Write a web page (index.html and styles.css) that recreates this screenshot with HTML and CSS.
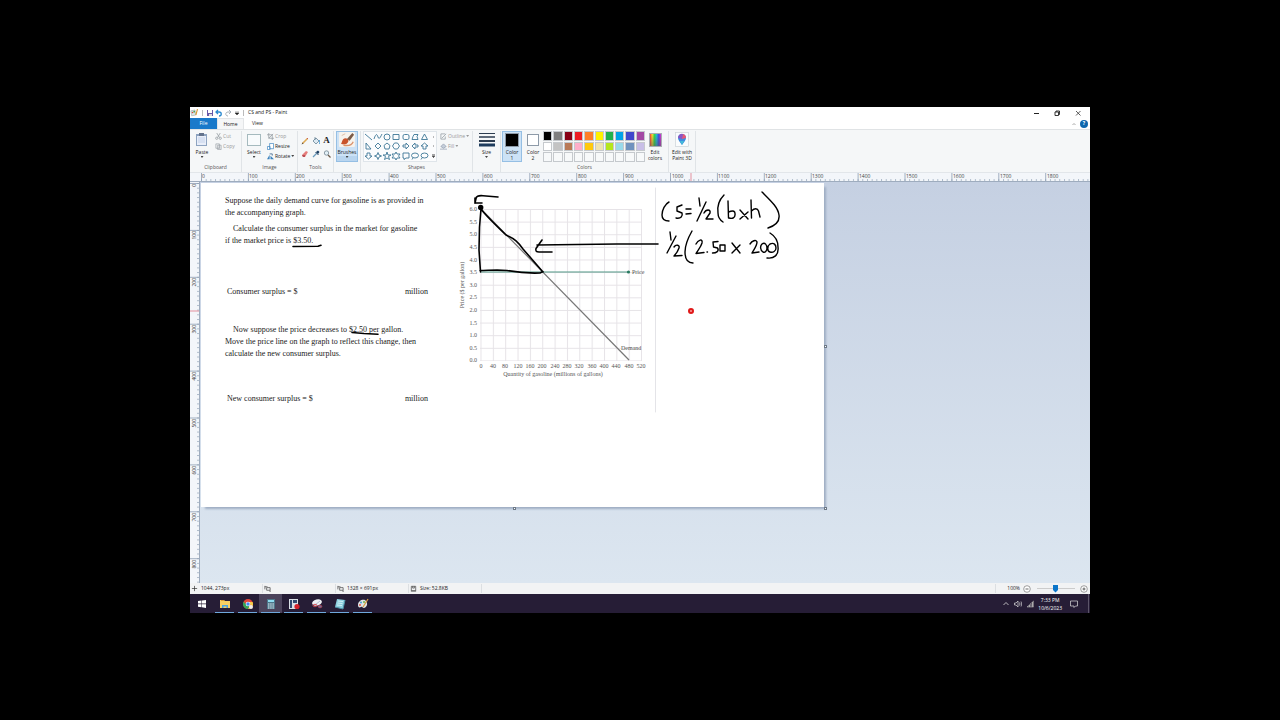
FILE: index.html
```html
<!DOCTYPE html>
<html lang="en">
<head>
    <meta charset="UTF-8">
    <meta name="viewport" content="width=device-width, initial-scale=1.0">
    <title>CS and PS - Paint</title>
    <link rel="stylesheet" href="styles.css">
</head>
<body>
    <div class="desktop">
        <header class="titlebar">
            <svg class="app-icon" viewBox="0 0 12 10"><path d="M1 3l5-1 1 6-5 1z" fill="#d9e4e8" stroke="#8a9a9c" stroke-width=".6"/><circle cx="3" cy="5" r="1" fill="#d94b3a"/><circle cx="5" cy="4" r="1" fill="#4aa24a"/><path d="M7 8L9 1" stroke="#d9962f" stroke-width="1.3"/></svg>
            <span class="bar-sep"></span>
            <button class="quick" aria-label="Save"><svg viewBox="0 0 8 8"><path d="M1 1h6v6H1z" fill="#6a59a8"/><path d="M2 1h4v3H2z" fill="#fff"/><path d="M3 5h3v2H3z" fill="#ddd"/></svg></button>
            <button class="quick" aria-label="Undo"><svg viewBox="0 0 8 8"><path d="M3 1L1 3l2 2M1 3h3c3 0 3 4 0 4" fill="none" stroke="#2b8ad0" stroke-width="1.3"/></svg></button>
            <button class="quick" aria-label="Redo"><svg viewBox="0 0 8 8"><path d="M5 1l2 2-2 2M7 3H4C1 3 1 7 4 7" fill="none" stroke="#a8b0b8"/></svg></button>
            <button class="quick" aria-label="Customize"><svg viewBox="0 0 8 8"><path d="M2 3h4M2 4h4L4 6z" fill="#222" stroke="#222" stroke-width=".4"/></svg></button>
            <span class="bar-sep"></span>
            <h1 class="window-title">CS and PS - Paint</h1>
            <button class="win-btn" aria-label="Minimize"><svg viewBox="0 0 8 8"><path d="M2 4.500h5" stroke="#222"/></svg></button>
            <button class="win-btn" aria-label="Restore"><svg viewBox="0 0 8 8"><path d="M2 3h3.500v3.500H2zM3 3V2h3.500v3.500h-1" fill="none" stroke="#222" stroke-width=".9"/></svg></button>
            <button class="win-btn" aria-label="Close"><svg viewBox="0 0 8 8"><path d="M2 2l4.500 4.500M6.500 2L2 6.500" stroke="#333" stroke-width=".8"/></svg></button>
        </header>

        <nav class="tabs">
            <button class="tab tab-file">File</button>
            <button class="tab tab-active">Home</button>
            <button class="tab">View</button>
            <button class="tab-tool" aria-label="Collapse ribbon"><svg viewBox="0 0 8 8"><path d="M2.500 5L4 3.500 5.500 5" fill="none" stroke="#888" stroke-width=".7"/></svg></button>
            <button class="help" aria-label="Help">?</button>
        </nav>

        <section class="ribbon">
            <div class="group clipboard">
                <div class="group-body">
                    <button class="big">
                        <svg class="big-icon" viewBox="0 0 14 15"><path d="M1 2h11v12H1z" fill="#8da3c0"/><path d="M2 4h9v9H2z" fill="#e8eef9"/><path d="M4 1h5v3H4z" fill="#63738c"/><path d="M3 6h7M3 8h7M3 10h7" stroke="#b5c6e4" stroke-width=".7"/></svg>
                        Paste<i class="arrow"></i>
                    </button>
                    <div class="stack">
                        <button class="small off"><svg viewBox="0 0 8 8"><path d="M2 0l3 5M6 0L3 5" stroke="#8e969c" stroke-width=".8"/><circle cx="2" cy="6" r="1.300" fill="none" stroke="#8e969c" stroke-width=".8"/><circle cx="6" cy="6" r="1.300" fill="none" stroke="#8e969c" stroke-width=".8"/></svg>Cut</button>
                        <button class="small off"><svg viewBox="0 0 8 8"><path d="M1 1h4v5H1zM3 2.500h4v5H3z" fill="#f5f6f7" stroke="#8e969c" stroke-width=".7"/><path d="M4 4.500h2M4 6h2" stroke="#8e969c" stroke-width=".5"/></svg>Copy</button>
                    </div>
                </div>
                <h2 class="group-label">Clipboard</h2>
            </div>

            <div class="group image">
                <div class="group-body">
                    <button class="big">
                        <svg class="big-icon" viewBox="0 0 14 15"><path d="M.500 2.500h13v11H.500z" fill="#f8fbfc" stroke="#3f6c74" stroke-dasharray="1 1" stroke-width=".9"/></svg>
                        Select<i class="arrow"></i>
                    </button>
                    <div class="stack">
                        <button class="small off"><svg viewBox="0 0 8 8"><path d="M2 0v6h6M0 2h6v6M2 6l5-5" fill="none" stroke="#8e969c" stroke-width=".8"/></svg>Crop</button>
                        <button class="small"><svg viewBox="0 0 8 8"><path d="M3 .500h4.500v6H3zM.500 4h3v3.500h-3z" fill="#fff" stroke="#3b82bd" stroke-width=".8"/></svg>Resize</button>
                        <button class="small"><svg viewBox="0 0 8 8"><path d="M0 7l3-5v5zM4 7V3l4 4z" fill="#3b82bd"/><path d="M3 1h3v2" fill="none" stroke="#24527c" stroke-width=".8"/></svg>Rotate<i class="arrow"></i></button>
                    </div>
                </div>
                <h2 class="group-label">Image</h2>
            </div>

            <div class="group tools">
                <div class="group-body tool-grid">
                    <button aria-label="Pencil"><svg viewBox="0 0 8 8"><path d="M1.500 6.500L6.500 1.500" stroke="#dda854" stroke-width="1.600"/><path d="M.500 7.500l1-2 1 1z" fill="#55483c"/><path d="M6 1l1 1" stroke="#c75a55"/></svg></button>
                    <button aria-label="Fill"><svg viewBox="0 0 8 8"><path d="M1 4l3-3 3 3-3 3z" fill="#dce9f2" stroke="#597589" stroke-width=".7"/><path d="M3 0v3" stroke="#597589" stroke-width=".7"/><path d="M7 3c1 2 1 3 .500 4" fill="none" stroke="#2c8dd0"/></svg></button>
                    <button class="text-tool" aria-label="Text">A</button>
                    <button aria-label="Eraser"><svg viewBox="0 0 8 8"><path d="M1 5l4-4 2 1-3 5H2z" fill="#e57d7b"/><path d="M1 5l3 0v2H2z" fill="#b94f55"/></svg></button>
                    <button aria-label="Color picker"><svg viewBox="0 0 8 8"><path d="M1 7l3.500-3.500" stroke="#689bbd" stroke-width="1.200"/><path d="M4 2l2-1.500L7.500 2 6 4z" fill="#193e62"/><path d="M3.500 2l3 3" stroke="#193e62"/></svg></button>
                    <button aria-label="Magnifier"><svg viewBox="0 0 8 8"><circle cx="3.500" cy="3" r="2.200" fill="#e2f0f7" stroke="#667985" stroke-width=".7"/><path d="M5 5l2.500 2.500" stroke="#6a5a4a" stroke-width="1.200"/></svg></button>
                </div>
                <h2 class="group-label">Tools</h2>
            </div>

            <div class="group brushes">
                <button class="big selected split">
                    <svg class="big-icon" viewBox="0 0 18 17"><rect width="18" height="17" rx="1" fill="#f7f3ed"/><path d="M3 12c1-5 4-6 7-4 2 3-1 7-6 6-2 0-2-1-1-2z" fill="#c9542c"/><path d="M9 8l6-7 2 2-5 7z" fill="#7b5b47"/><path d="M5 15c6 1 10-1 11-4" fill="none" stroke="#d9946f" stroke-width="1.500"/><path d="M3 4l4-2" stroke="#d9b79e"/></svg>
                    Brushes<i class="arrow"></i>
                </button>
            </div>

            <div class="group shapes">
                <div class="group-body">
                    <button class="shape-box" aria-label="Shape gallery">
                        <svg viewBox="3 1 72 29" fill="none" stroke="#3d7796" stroke-width=".9">
                            <path d="M4 3l7 6M13 8c2-6 3-5 4-2s2 1 4-3"/>
                            <circle cx="26" cy="6" r="3"/><path d="M32 3.500h6v5h-6z"/><rect x="42" y="3.500" width="6" height="5" rx="1.500"/>
                            <path d="M51 8.500l1-3 1-2h4l-1 2 1 3zM63.500 3l3 5.500h-6z"/>
                            <path d="M5 12v6h5zM17 12l3 3-3 3-3-3zM26 12l3 2.500-1 3.500h-4l-1-3.500z"/><path d="M33.500 12h3l2 3-2 3h-3l-2-3zM42 14h3v-2l3 3-3 3v-2h-3zM57 14h-3v-2l-3 3 3 3v-2h3zM62 18v-3h-2l3.500-3 3.500 3h-2v3z"/>
                            <path d="M6 22h3v3h2l-3.500 3L4 25h2zM17 21.500l1 2.500 2.500 1-2.500 1-1 2.500-1-2.500-2.500-1 2.500-1zM26 21l1 3h3l-2.500 1.500 1 3L26 27l-2.500 1.500 1-3L22 24h3zM35 21l1 2h3l-1.500 2 1.500 2h-3l-1 2-1-2h-3l1.500-2-1.500-2h3z"/>
                            <path d="M42 22h6v5h-3l-2 1.500V27h-1z"/><ellipse cx="54" cy="24.500" rx="3.500" ry="2.500"/><path d="M52 27l-1 1.500M61 27l-1 1.500"/><ellipse cx="63.500" cy="24.500" rx="3.500" ry="2.500"/>
                            <path d="M72 6h1M72 15h1" stroke="#666"/><path d="M71 24h3M71.500 25.500h2l-1 1z" stroke="#333"/>
                        </svg>
                    </button>
                    <div class="stack">
                        <button class="small off"><svg viewBox="0 0 8 8"><path d="M6 1H1v6h5V4M2 6l5-5" fill="none" stroke="#8e969c" stroke-width=".8"/></svg>Outline<i class="arrow"></i></button>
                        <button class="small off"><svg viewBox="0 0 8 8"><path d="M1 4l3-3 3 3-3 2zM0 7h8" fill="#c6cfdb" stroke="#8e99ad" stroke-width=".8"/></svg>Fill<i class="arrow"></i></button>
                    </div>
                </div>
                <h2 class="group-label">Shapes</h2>
            </div>

            <div class="group size">
                <button class="big">
                    <svg class="big-icon" viewBox="0 0 16 15"><path d="M0 1.500h16" stroke="#2d3d50"/><path d="M0 5h16" stroke="#2d3d50" stroke-width="1.500"/><path d="M0 9h16" stroke="#2d3d50" stroke-width="2"/><path d="M0 13h16" stroke="#1e3c5d" stroke-width="3"/></svg>
                    Size<i class="arrow"></i>
                </button>
            </div>

            <div class="group colors">
                <div class="group-body">
                    <button class="big selected color-slot"><span class="chip chip-one"></span><span>Color<br>1</span></button>
                    <button class="big color-slot"><span class="chip chip-two"></span><span>Color<br>2</span></button>
                    <div class="palette">
                        <button class="sw black" aria-label="Black"></button><button class="sw gray" aria-label="Gray"></button><button class="sw darkred" aria-label="Dark red"></button><button class="sw red" aria-label="Red"></button><button class="sw orange" aria-label="Orange"></button><button class="sw yellow" aria-label="Yellow"></button><button class="sw green" aria-label="Green"></button><button class="sw turquoise" aria-label="Turquoise"></button><button class="sw indigo" aria-label="Indigo"></button><button class="sw purple" aria-label="Purple"></button>
                        <button class="sw white" aria-label="White"></button><button class="sw silver" aria-label="Light gray"></button><button class="sw brown" aria-label="Brown"></button><button class="sw rose" aria-label="Rose"></button><button class="sw gold" aria-label="Gold"></button><button class="sw cream" aria-label="Light yellow"></button><button class="sw lime" aria-label="Lime"></button><button class="sw sky" aria-label="Light turquoise"></button><button class="sw steel" aria-label="Blue gray"></button><button class="sw lavender" aria-label="Lavender"></button>
                        <button class="sw" aria-label="Custom 1"></button><button class="sw" aria-label="Custom 2"></button><button class="sw" aria-label="Custom 3"></button><button class="sw" aria-label="Custom 4"></button><button class="sw" aria-label="Custom 5"></button><button class="sw" aria-label="Custom 6"></button><button class="sw" aria-label="Custom 7"></button><button class="sw" aria-label="Custom 8"></button><button class="sw" aria-label="Custom 9"></button><button class="sw" aria-label="Custom 10"></button>
                    </div>
                    <button class="big edit-colors"><span class="rainbow"></span><span>Edit<br>colors</span></button>
                </div>
                <h2 class="group-label">Colors</h2>
            </div>

            <div class="group paint3d">
                <button class="big">
                    <svg class="big-icon" viewBox="0 0 14 15"><rect x=".500" y=".500" width="13" height="14" fill="#fafcfd" stroke="#ccd3d8" stroke-width=".7"/><path d="M7 13C5 10 3 8 3 6a4 4 0 0 1 8 0c0 2-2 4-4 7z" fill="#3e8cdf"/><path d="M3 6a4 4 0 0 1 5-4L7 7z" fill="#8a55c4"/><path d="M8 2a4 4 0 0 1 3 4L7 7z" fill="#e85577"/><path d="M5 9l2 4 2-4z" fill="#43bcd8"/></svg>
                    <span>Edit with<br>Paint 3D</span>
                </button>
            </div>
        </section>

        <div class="ruler-x">
            <svg width="891" height="10">
                <defs>
                    <pattern id="ticks-x" x="2" width="4.690" height="10" patternUnits="userSpaceOnUse"><path d="M.500 6v2" stroke="#9babbf" stroke-width=".8"/></pattern>
                    <pattern id="marks-x" x="2" width="46.900" height="10" patternUnits="userSpaceOnUse"><path d="M.500 0v8" stroke="#8d9db3" stroke-width=".8"/></pattern>
                </defs>
                <rect x="2" width="889" height="10" fill="url(#ticks-x)"/>
                <rect x="2" width="889" height="10" fill="url(#marks-x)"/>
                <path class="ruler-cursor" d="M492 0v9"/>
                <g class="ruler-text">
                    <text x="3" y="5">0</text><text x="50" y="5">100</text><text x="97" y="5">200</text><text x="144" y="5">300</text><text x="191" y="5">400</text><text x="238" y="5">500</text><text x="285" y="5">600</text><text x="332" y="5">700</text><text x="379" y="5">800</text><text x="426" y="5">900</text><text x="473" y="5">1000</text><text x="519" y="5">1100</text><text x="566" y="5">1200</text><text x="613" y="5">1300</text><text x="660" y="5">1400</text><text x="707" y="5">1500</text><text x="754" y="5">1600</text><text x="801" y="5">1700</text><text x="848" y="5">1800</text>
                </g>
            </svg>
        </div>

        <main class="workspace">
            <div class="ruler-y">
                <svg width="9" height="401">
                    <defs>
                        <pattern id="ticks-y" y="1" width="9" height="4.690" patternUnits="userSpaceOnUse"><path d="M7 .500h2" stroke="#9babbf" stroke-width=".8"/></pattern>
                        <pattern id="marks-y" y="1" width="9" height="46.900" patternUnits="userSpaceOnUse"><path d="M0 .500h9" stroke="#8d9db3" stroke-width=".8"/></pattern>
                    </defs>
                    <rect y="1" width="9" height="400" fill="url(#ticks-y)"/>
                    <rect y="1" width="9" height="400" fill="url(#marks-y)"/>
                    <path class="ruler-cursor" d="M0 129h9"/>
                    <g class="ruler-text" text-anchor="end">
                        <text transform="translate(6 2) rotate(-90)">0</text><text transform="translate(6 49) rotate(-90)">100</text><text transform="translate(6 96) rotate(-90)">200</text><text transform="translate(6 143) rotate(-90)">300</text><text transform="translate(6 190) rotate(-90)">400</text><text transform="translate(6 237) rotate(-90)">500</text><text transform="translate(6 284) rotate(-90)">600</text><text transform="translate(6 331) rotate(-90)">700</text><text transform="translate(6 378) rotate(-90)">800</text>
                    </g>
                </svg>
            </div>

            <div class="canvas">
                <article class="question">
                    <p>Suppose the daily demand curve for gasoline is as provided in<br>the accompanying graph.</p>
                    <p class="indent">Calculate the consumer surplus in the market for gasoline<br>if the market price is $3.50.</p>
                    <div class="answer"><span>Consumer surplus = $</span><span>million</span></div>
                    <p class="indent">Now suppose the price decreases to $2.50 per gallon.<br>Move the price line on the graph to reflect this change, then<br>calculate the new consumer surplus.</p>
                    <div class="answer"><span>New consumer surplus = $</span><span>million</span></div>
                </article>

                <svg class="graph" viewBox="455 188 200 224" width="200" height="224">
                    <defs>
                        <pattern id="grid" x="480.500" y="209" width="12.350" height="12.620" patternUnits="userSpaceOnUse"><path d="M.500 0v13M0 .500h13" fill="none" stroke="#e6e3e7"/></pattern>
                    </defs>
                    <rect x="480" y="209" width="162" height="152" fill="url(#grid)"/>
                    <path d="M481 209L629 360" stroke="#777" stroke-width="1.200"/>
                    <path d="M481 272h148" stroke="#4f9683" stroke-width="1.200"/>
                    <circle cx="628.500" cy="272" r="1.600" fill="#287a60"/>
                    <g text-anchor="end">
                        <text x="477" y="211">6.0</text><text x="477" y="224">5.5</text><text x="477" y="236">5.0</text><text x="477" y="249">4.5</text><text x="477" y="262">4.0</text><text x="477" y="274">3.5</text><text x="477" y="287">3.0</text><text x="477" y="299">2.5</text><text x="477" y="312">2.0</text><text x="477" y="325">1.5</text><text x="477" y="337">1.0</text><text x="477" y="350">0.5</text><text x="477" y="362">0.0</text>
                    </g>
                    <g text-anchor="middle">
                        <text x="481" y="368">0</text><text x="493" y="368">40</text><text x="505" y="368">80</text><text x="518" y="368">120</text><text x="530" y="368">160</text><text x="542" y="368">200</text><text x="555" y="368">240</text><text x="567" y="368">280</text><text x="579" y="368">320</text><text x="592" y="368">360</text><text x="604" y="368">400</text><text x="616" y="368">440</text><text x="629" y="368">480</text><text x="641" y="368">520</text>
                        <text x="553" y="376">Quantity of gasoline (millions of gallons)</text>
                        <text transform="translate(464 285) rotate(-90)">Price ($ per gallon)</text>
                    </g>
                    <text x="632" y="274">Price</text>
                    <text x="621" y="350">Demand</text>
                </svg>

                <svg class="ink" viewBox="201 183 623 324">
                    <path class="rule" d="M655.500 188v224"/>
                    <g stroke-width="1.600">
                        <path d="M293 246.500l25-.300 3-1M352 332.500l12 1 14 .800"/>
                        <path d="M498 197l-15-1.300c-5-.500-7 1-7 3l-1 4.500M475 198v5h7"/>
                        <path d="M481 209l-1.500 18-.500 23 1.500 22M481 209c5 7 14 15 25 26 9 4 12 7 17 14l20 23M480 270.500c8 0 17-1 27 0 11 2 20 3 33 2.500l3-1.500"/>
                        <path d="M658 244H617l-80 1M542 240l-6 8.500c-1 3 1 3.500 3 3.500h13"/>
                    </g>
                    <circle class="start" cx="480.700" cy="207.500" r="2.700"/>
                    <g stroke-width="1.400">
                        <path d="M669 202c-4 2-7 8-7 13 0 4 3 6 7 6M682 205l-5 2v4l5 2c1 3-1 6-6 5M686 209h5M686 214l5-.500"/>
                        <path d="M699 198l1 8M706 202l-9 19M704 213c2-4 7-4 6 0l-4 6h7M724 195c-5 5-7 11-6 18 0 4 2 7 5 9"/>
                        <path d="M728 201l.500 17M728.500 212c5-2 7-1 6.500 3 0 3-3 4-6 3M740 210l8 9M748 212l-8 7M751 200l.500 18M751.500 211c3-3 6-3 7 0l1.500 6M762 192c8 8 16 15 17 23 1 7-5 11-11 13"/>
                        <path d="M670 232l1 8M676 236l-9 17M674 247c2-3 6-2 5 1-1 3-3 6-5 8l8-.500M692 231c-4 7-7 14-7 21 0 7 3 11 8 11"/>
                        <path d="M696 244c2-4 7-6 6-1-1 4-4 7-6 10.500l8-1M707 252h.500M718 241.500l-5 .500.500 5 4 1c2 3-1 5-5 5M720 245v6h5v-6zM732 243l8 10M740 245l-8 8M750 244c2-3 6-5 7-2 0 4-3 7-5 11l7-1"/>
                        <path d="M762 244c3-2 5 1 5 4s-2 5-4 4c-3-2-3-6-1-8zM770 244c4-2 6 1 6 4s-3 5-6 4c-3-1-3-6 0-8z"/>
                        <path d="M770 233c5 3 8 8 8 14 1 8-4 12-11 11"/>
                    </g>
                    <circle class="pointer" cx="691" cy="311" r="2"/>
                </svg>
                <i class="handle handle-right"></i>
                <i class="handle handle-bottom"></i>
                <i class="handle handle-corner"></i>
            </div>
        </main>

        <footer class="statusbar">
            <span class="status"><svg viewBox="0 0 8 8"><path d="M4 1v6M1 4h6" stroke="#333" stroke-width=".8"/></svg>1044, 273px</span>
            <span class="status"><svg viewBox="0 0 8 8"><path d="M1 2h3M1 1v4M3 3h4v3H3zM6 7h2" fill="none" stroke="#444" stroke-width=".8"/></svg></span>
            <span class="status"><svg viewBox="0 0 8 8"><path d="M1 2h3M1 1v4M3 3h4v3H3zM6 7h2" fill="none" stroke="#444" stroke-width=".8"/></svg>1328 × 691px</span>
            <span class="status"><svg viewBox="0 0 8 8"><path d="M1.500 1.500h5v5h-5zM3 1.500v2h2v-2M1 7h6" fill="none" stroke="#444" stroke-width=".8"/></svg>Size: 52.8KB</span>
            <div class="zoom">
                <label for="zoom">100%</label>
                <button aria-label="Zoom out"><svg viewBox="0 0 8 8"><circle cx="4" cy="4" r="3.300" fill="#fff" stroke="#777" stroke-width=".7"/><path d="M2.500 4h3" stroke="#444" stroke-width=".8"/></svg></button>
                <input id="zoom" type="range" min="0" max="100" value="50">
                <button aria-label="Zoom in"><svg viewBox="0 0 8 8"><circle cx="4" cy="4" r="3.300" fill="#fff" stroke="#777" stroke-width=".7"/><path d="M2.500 4h3M4 2.500v3" stroke="#444" stroke-width=".8"/></svg></button>
            </div>
        </footer>

        <nav class="taskbar">
            <button class="task start-btn" aria-label="Start"><svg viewBox="0 0 12 12"><path d="M2 3l3.500-.500v3H2zM6 2.500L10 2v3.500H6zM2 6.200h3.500v3L2 8.800zM6 6.200h4V10l-4-.700z" fill="#fff"/></svg></button>
            <button class="task" aria-label="File Explorer"><svg viewBox="0 0 12 12"><path d="M1 2h4l1 1h5v7H1z" fill="#f6cf62"/><path d="M2 2h3v1H2z" fill="#d79b32"/><path d="M3 7h6v3H3z" fill="#4aa3df"/><path d="M4.500 8.500h3V10h-3z" fill="#f6cf62"/></svg></button>
            <button class="task" aria-label="Chrome"><svg viewBox="0 0 12 12"><circle cx="6" cy="6" r="5" fill="#e4473b"/><path d="M1.500 3.700A5 5 0 0 0 6 11l2-4-4-1z" fill="#35a457"/><path d="M10.600 4A5 5 0 0 1 6 11l2.500-4L7 4z" fill="#f7ca45"/><circle cx="6" cy="6" r="2.300" fill="#fff"/><circle cx="6" cy="6" r="1.700" fill="#4285f4"/><circle cx="9" cy="9" r="2" fill="#f3eee9"/></svg></button>
            <button class="task task-active" aria-label="Calculator"><svg viewBox="0 0 12 12"><path d="M2 1h8v10H2z" fill="#4c7588"/><path d="M3 2h6v2H3z" fill="#8edcf0"/><path d="M3 6h6M3 8h6M3 10h6" stroke="#e9f5fa" stroke-dasharray="1.500 .700"/></svg></button>
            <button class="task" aria-label="Recorder"><svg viewBox="0 0 12 12"><path d="M1 1h9v10H1z" fill="#dae0e6"/><path d="M2 2h2v8H2zM5 2h4v3H5z" fill="#314a70"/><circle cx="9" cy="8.500" r="2.600" fill="#d3222b"/></svg></button>
            <button class="task" aria-label="Snipping Tool"><svg viewBox="0 0 12 12"><ellipse cx="6" cy="4.500" rx="5" ry="3" fill="#eef1f4" transform="rotate(-15 6 4.500)"/><path d="M4 7l5-4" stroke="#9aa9c2" stroke-width=".8"/><ellipse cx="4" cy="7.500" rx="2" ry="1.200" fill="none" stroke="#d63e48" stroke-width=".9"/><ellipse cx="9" cy="8.500" rx="1.800" ry="1.300" fill="#5977a5" stroke="#d63e48" stroke-width=".7"/></svg></button>
            <button class="task" aria-label="Notepad"><svg viewBox="0 0 12 12"><path d="M3 1l8 1-2 9-8-2z" fill="#8cd0df"/><path d="M4 3l5 .600M3.500 5l5 .600M3 7l5 .600" stroke="#eafafe" stroke-width=".7"/><path d="M1 9l8 2 2-9" fill="none" stroke="#4c8fa5"/></svg></button>
            <button class="task" aria-label="Paint"><svg viewBox="0 0 12 12"><path d="M1 7c0-4 4-6 7-5 3 2 3 7-1 8-2 0-1-2-3-1-2 1-3 0-3-2z" fill="#dfe5e5"/><circle cx="3" cy="7" r="1" fill="#e0534b"/><circle cx="4" cy="4.500" r="1" fill="#4a9ed8"/><circle cx="7" cy="4" r="1" fill="#6eb64c"/><path d="M6 9l5-8" stroke="#d59c43" stroke-width="1.300"/></svg></button>
            <div class="tray">
                <svg viewBox="0 0 8 8"><path d="M1.500 5L4 2.500 6.500 5" fill="none" stroke="#ddd" stroke-width=".8"/></svg>
                <svg viewBox="0 0 8 8"><path d="M.500 3h1.500l2-2v6L2 5H.500zM5.500 2.500q1 1.500 0 3M7 1.500q1.500 2.500 0 5" fill="none" stroke="#ddd" stroke-width=".7"/></svg>
                <svg viewBox="0 0 8 8"><path d="M2 7V6M3.500 7V5M5 7V3.500M6.500 7V2" stroke="#bbb" stroke-width=".9"/><path d="M1 7h6.500V1z" fill="none" stroke="#aaa" stroke-width=".6"/></svg>
                <div class="clock">7:33 PM<br>10/6/2023</div>
                <svg class="notice" viewBox="0 0 8 8"><path d="M.500 1h7v5H5.500L4 7.500V6H.500z" fill="none" stroke="#ddd" stroke-width=".7"/></svg>
            </div>
        </nav>
    </div>
</body>
</html>
```
FILE: styles.css
```css
* {
    margin: 0;
    padding: 0;
    box-sizing: border-box;
}

body {
    background: #000;
    min-height: 100vh;
    display: flex;
    padding: 107px 190px;
    font-family: "Open Sans", "Noto Sans", sans-serif;
    font-size: 5px;
    line-height: 7px;
    color: #222;
}

button {
    font: inherit;
    color: inherit;
    background: none;
    border: none;
}

svg {
    display: block;
    flex: none;
}

h1, h2 {
    font-size: 5px;
    font-weight: normal;
}

.desktop {
    flex: 1;
    min-width: 0;
    display: flex;
    flex-direction: column;
    background: #fff;
    overflow: hidden;
}

/* Title bar */
.titlebar {
    height: 11px;
    display: flex;
    align-items: center;
    padding-right: 2px;
}

.app-icon {
    width: 10px;
    height: 9px;
}

.bar-sep {
    width: 1px;
    height: 6px;
    margin: 0 2px;
    background: #bbb;
}

.quick {
    width: 9px;
    display: flex;
    justify-content: center;
}

.quick svg, .tab-tool svg, .zoom svg, .tray svg {
    width: 8px;
    height: 8px;
}

.window-title {
    flex: 1;
    padding-left: 2px;
    color: #111;
}

.win-btn {
    width: 21px;
    display: flex;
    justify-content: center;
}

.win-btn svg {
    width: 8px;
    height: 8px;
}

/* Tabs */
.tabs {
    height: 11px;
    display: flex;
    align-items: center;
}

.tab {
    width: 27px;
    height: 11px;
}

.tab-file {
    background: #1979ca;
    color: #fff;
}

.tab-active {
    background: #f5f6f7;
    border: 1px solid #e3e5e7;
    border-bottom: none;
}

.tab-tool {
    margin-left: auto;
}

.help {
    width: 8px;
    height: 8px;
    margin: 0 2px;
    border-radius: 50%;
    background: #0d66ad;
    color: #fff;
    font-weight: bold;
}

/* Ribbon */
.ribbon {
    height: 43px;
    display: flex;
    padding-top: 1px;
    background: #f5f7f8;
    border-top: 1px solid #e0e3e5;
}

.group {
    display: flex;
    flex-direction: column;
    align-items: center;
    border-right: 1px solid #e0e4e7;
}

.group-body {
    flex: 1;
    display: flex;
    align-self: stretch;
}

.group-label {
    height: 9px;
    line-height: 9px;
    color: #555;
}

.clipboard {
    width: 52px;
}

.image {
    width: 56px;
}

.tools {
    width: 36px;
}

.brushes {
    width: 27px;
}

.shapes {
    width: 112px;
}

.size {
    width: 28px;
}

.colors {
    width: 168px;
}

.paint3d {
    width: 27px;
}

.big {
    width: 24px;
    height: 31px;
    padding-top: 1px;
    display: flex;
    flex-direction: column;
    align-items: center;
    flex: none;
    line-height: 6px;
    text-align: center;
}

.big-icon {
    width: 16px;
    height: 15px;
    margin-bottom: 2px;
}

.selected {
    background: #cce2f6;
    border: 1px solid #95bfe4;
    padding-top: 0;
}

.split {
    width: 22px;
    background: linear-gradient(#cce2f6 24px, #b9d5ef 24px);
}

.arrow {
    display: block;
    width: 3px;
    height: 2px;
    margin-top: 1px;
    background: #444;
    clip-path: polygon(0 0, 100% 0, 50% 100%);
}

.stack {
    display: flex;
    flex-direction: column;
    padding-left: 1px;
}

.small {
    height: 10px;
    display: flex;
    align-items: center;
    gap: 1px;
}

.small svg {
    width: 7px;
    height: 7px;
}

.small .arrow {
    margin: 0;
}

.off {
    color: #999;
}

.off .arrow {
    background: #999;
}

.tool-grid {
    display: grid;
    grid-template-columns: repeat(3, 11px);
    grid-template-rows: repeat(2, 13px);
    justify-content: center;
    padding-top: 3px;
}

.tool-grid button {
    display: flex;
    align-items: center;
    justify-content: center;
}

.tool-grid svg {
    width: 8px;
    height: 8px;
}

.tool-grid .text-tool {
    font-family: "Liberation Serif", serif;
    font-size: 9px;
    font-weight: bold;
    color: #222;
}

.shape-box {
    width: 74px;
    height: 31px;
    margin: 0 2px;
    border: 1px solid #dfe5ea;
    background: #fbfcfd;
}

.shape-box svg {
    width: 72px;
    height: 29px;
}

.color-slot {
    width: 20px;
    margin-left: 1px;
}

.chip {
    display: block;
    width: 14px;
    height: 14px;
    margin: 1px 0 2px;
    border: 1px solid #8d9aa8;
}

.chip-one {
    background: #000;
}

.chip-two {
    width: 12px;
    height: 12px;
    margin: 2px 0 3px;
    background: #fff;
}

.palette {
    width: 102px;
    height: 31px;
    display: grid;
    grid-template-columns: repeat(10, 1fr);
    grid-template-rows: repeat(3, 1fr);
    gap: 1px;
}

.sw {
    border: 1px solid #c5c9cd;
    background: #f7f9fa;
}

.black { background: #000; }
.gray { background: #7f7f7f; }
.darkred { background: #880015; }
.red { background: #ed1c24; }
.orange { background: #ff7f27; }
.yellow { background: #fff200; }
.green { background: #22b14c; }
.turquoise { background: #00a2e8; }
.indigo { background: #3f48cc; }
.purple { background: #a349a4; }
.white { background: #fff; }
.silver { background: #c3c3c3; }
.brown { background: #b97a57; }
.rose { background: #ffaec9; }
.gold { background: #ffc90e; }
.cream { background: #efe4b0; }
.lime { background: #b5e61d; }
.sky { background: #99d9ea; }
.steel { background: #7092be; }
.lavender { background: #c8bfe7; }

.edit-colors {
    width: 20px;
}

.rainbow {
    display: block;
    width: 13px;
    height: 14px;
    margin: 1px 0 2px;
    border: 1px solid #a9adb3;
    background: linear-gradient(transparent, #5558), linear-gradient(90deg, #f33, #fd3, #3d4, #2bd, #44e, #e3c);
}

/* Rulers and the drawing area */
.ruler-x {
    height: 10px;
    padding-left: 9px;
    background: #f3f6fa;
    border-top: 1px solid #e2e6ea;
    border-bottom: 1px solid #9eacbe;
    overflow: hidden;
}

.ruler-text {
    font-size: 5px;
    fill: #444;
}

.ruler-cursor {
    stroke: #e3909e;
}

.workspace {
    flex: 1;
    min-height: 0;
    display: flex;
    align-items: flex-start;
    background: linear-gradient(#c5d0e2, #dce6f0);
    overflow: hidden;
}

.ruler-y {
    width: 10px;
    height: 100%;
    background: #f3f6fa;
    border-right: 1px solid #9eacbe;
    overflow: hidden;
}

.canvas {
    position: relative;
    flex: none;
    display: flex;
    width: 623px;
    height: 324px;
    margin: 1px 0 0 1px;
    background: #fff;
    box-shadow: 3px 3px 2px -1px #9faec4;
}

.question {
    width: 254px;
    padding: 12px 20px 0 24px;
    font-family: "Liberation Serif", serif;
    font-size: 8px;
    line-height: 12px;
    color: #222;
}

.indent {
    margin-top: 4px;
    text-indent: 8px;
}

.answer {
    display: flex;
    justify-content: space-between;
    padding: 39px 7px 0 2px;
}

.answer + .indent {
    margin-top: 26px;
}

.answer:last-child {
    padding-top: 33px;
}

.graph {
    margin-top: 5px;
    font-family: "Liberation Serif", serif;
    font-size: 6px;
    fill: #555;
}

.ink {
    position: absolute;
    inset: 0;
    fill: none;
    stroke: #000;
    stroke-linecap: round;
    stroke-linejoin: round;
}

.start {
    fill: #000;
    stroke: none;
}

.rule {
    stroke: #e4e4e8;
}

.pointer {
    fill: #f6a0a0;
    stroke: #e01818;
    stroke-width: 2;
}

.handle {
    position: absolute;
    width: 3px;
    height: 3px;
    background: #fff;
    border: 1px solid #6d7987;
}

.handle-right {
    left: 100%;
    top: 50%;
}

.handle-bottom {
    left: 50%;
    top: 100%;
}

.handle-corner {
    left: 100%;
    top: 100%;
}

/* Status bar */
.statusbar {
    height: 11px;
    display: flex;
    align-items: center;
    background: #f2f3f4;
    color: #222;
}

.status {
    width: 73px;
    display: flex;
    align-items: center;
    gap: 3px;
    padding-left: 1px;
    border-right: 1px solid #dcdfe2;
    height: 9px;
}

.status svg {
    width: 7px;
    height: 7px;
}

.zoom {
    margin-left: auto;
    display: flex;
    align-items: center;
    gap: 3px;
    padding: 0 2px 0 11px;
    border-left: 1px solid #dcdfe2;
}

.zoom input {
    width: 43px;
    height: 9px;
    appearance: none;
    background: linear-gradient(#ccc, #ccc) center / 38px 1px no-repeat;
}

.zoom input::-webkit-slider-thumb {
    appearance: none;
    width: 5px;
    height: 8px;
    background: #0b75c9;
    clip-path: polygon(0 0, 100% 0, 100% 70%, 50% 100%, 0 70%);
}

/* Taskbar */
.taskbar {
    height: 19px;
    display: flex;
    background: #261d36;
}

.task {
    width: 23px;
    display: flex;
    align-items: center;
    justify-content: center;
    background: linear-gradient(#6fa8dc, #6fa8dc) bottom / 19px 1px no-repeat;
}

.task svg {
    width: 12px;
    height: 12px;
}

.start-btn {
    background: none;
}

.task-active {
    background-color: #4b435b;
}

.tray {
    margin-left: auto;
    display: flex;
    align-items: center;
    gap: 4px;
    padding-right: 10px;
    margin-right: 1px;
    border-right: 1px solid #5c5569;
    color: #fff;
}

.clock {
    line-height: 8px;
    text-align: center;
}

.tray .notice {
    margin-left: 4px;
}
```
